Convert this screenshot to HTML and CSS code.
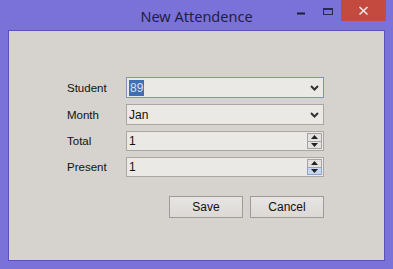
FILE: index.html
```html
<!DOCTYPE html>
<html>
<head>
<meta charset="utf-8">
<link rel="stylesheet" href="styles.css">
</head>
<body>
<div class="window">
  <div class="titlebar">
    <div class="spacer"></div>
    <div class="title">New Attendence</div>
    <div class="controls">
      <span class="cap min"><svg width="27" height="21" viewBox="0 0 27 21"><rect x="9" y="12.5" width="8" height="2" fill="#1d1d3a"/></svg></span>
      <span class="cap max"><svg width="26" height="21" viewBox="0 0 26 21"><rect x="8.5" y="8.5" width="9" height="6" fill="none" stroke="#2a2a50" stroke-width="1"/><rect x="8" y="8" width="10" height="2" fill="#2a2a50"/></svg></span>
      <span class="cap close"><svg width="45" height="21" viewBox="0 0 45 21"><path d="M18.5 7 L26.5 14.5 M26.5 7 L18.5 14.5" stroke="#f4e6e4" stroke-width="1.6" fill="none"/></svg></span>
    </div>
  </div>
  <div class="client">
    <div class="form">
      <span class="label">Student</span>
      <div class="field combo focused">
        <span class="value"><span class="sel">89</span></span>
        <svg class="chev" width="9" height="6" viewBox="0 0 9 6"><path d="M1 1 L4.5 4.5 L8 1" stroke="#333" stroke-width="2" fill="none"/></svg>
      </div>
      <span class="label">Month</span>
      <div class="field combo">
        <span class="value">Jan</span>
        <svg class="chev" width="9" height="6" viewBox="0 0 9 6"><path d="M1 1 L4.5 4.5 L8 1" stroke="#333" stroke-width="2" fill="none"/></svg>
      </div>
      <span class="label">Total</span>
      <div class="field num">
        <span class="value">1</span>
        <div class="spin">
          <span class="half"><svg width="7" height="4" viewBox="0 0 7 4"><polygon points="0,4 7,4 3.5,0" fill="#222"/></svg></span>
          <span class="half"><svg width="7" height="4" viewBox="0 0 7 4"><polygon points="0,0 7,0 3.5,4" fill="#222"/></svg></span>
        </div>
      </div>
      <span class="label">Present</span>
      <div class="field num">
        <span class="value">1</span>
        <div class="spin">
          <span class="half"><svg width="7" height="4" viewBox="0 0 7 4"><polygon points="0,4 7,4 3.5,0" fill="#222"/></svg></span>
          <span class="half hot"><svg width="7" height="4" viewBox="0 0 7 4"><polygon points="0,0 7,0 3.5,4" fill="#222"/></svg></span>
        </div>
      </div>
    </div>
    <div class="buttons">
      <button class="btn">Save</button>
      <button class="btn">Cancel</button>
    </div>
  </div>
</div>
</body>
</html>
```
FILE: styles.css
```css
html, body {
  margin: 0;
  padding: 0;
}
body {
  width: 393px;
  height: 269px;
  overflow: hidden;
  background: #7a72d9;
}
.window {
  width: 393px;
  height: 269px;
  display: flex;
  flex-direction: column;
  background: #7a72d9;
}
.titlebar {
  height: 30px;
  flex: none;
  display: grid;
  grid-template-columns: 1fr auto 1fr;
}
.title {
  font-family: "Noto Sans", "Open Sans", sans-serif;
  font-size: 14.5px;
  color: #1f1f42;
  align-self: center;
  padding-top: 2px;
  white-space: nowrap;
}
.controls {
  justify-self: end;
  align-self: start;
  display: flex;
  margin-right: 7px;
}
.cap {
  display: block;
  height: 21px;
}
.cap svg {
  display: block;
}
.min { width: 27px; }
.max { width: 26px; }
.close {
  width: 45px;
  background: #c44a3f;
}
.client {
  flex: 1;
  margin: 0 8px 8px 8px;
  border: 1px solid #5a52b6;
  background: #d6d2ce;
  font-family: "Liberation Sans", Arial, sans-serif;
  font-size: 11.5px;
  color: #111;
}
.form {
  display: grid;
  grid-template-columns: 59px 198px;
  grid-template-rows: 21px 21px 20px 20px;
  row-gap: 6px;
  padding: 46px 0 0 58px;
}
.label {
  align-self: center;
}
.field {
  box-sizing: border-box;
  border: 1px solid #aaa6a2;
  background: #ebe9e6;
  display: flex;
  align-items: center;
}
.combo.focused {
  border-color: #7f95b5;
}
.value {
  flex: 1;
  padding-left: 2px;
  font-size: 12px;
}
.sel {
  background: #3e6fb2;
  color: #d9e3f3;
  padding: 1px 1px;
}
.chev {
  display: block;
  margin-right: 4px;
}
.spin {
  width: 15px;
  align-self: stretch;
  margin: 1px 1px 1px 0;
  display: flex;
  flex-direction: column;
}
.half {
  flex: 1;
  box-sizing: border-box;
  border: 1px solid #a5a3a1;
  background: #e4e2e0;
  display: flex;
  align-items: center;
  justify-content: center;
}
.half + .half {
  border-top: none;
}
.half svg {
  display: block;
}
.half.hot {
  background: #c5d6ee;
  border-color: #8ea6cc;
}
.buttons {
  display: flex;
  justify-content: flex-end;
  gap: 7px;
  width: 315px;
  margin-top: 19px;
}
.btn {
  width: 74px;
  height: 22px;
  margin: 0;
  padding: 0;
  box-sizing: border-box;
  border: 1px solid #9e9b98;
  background: linear-gradient(#e7e5e3, #dbd8d5);
  font-family: "Liberation Sans", Arial, sans-serif;
  font-size: 12px;
  color: #111;
}
```
